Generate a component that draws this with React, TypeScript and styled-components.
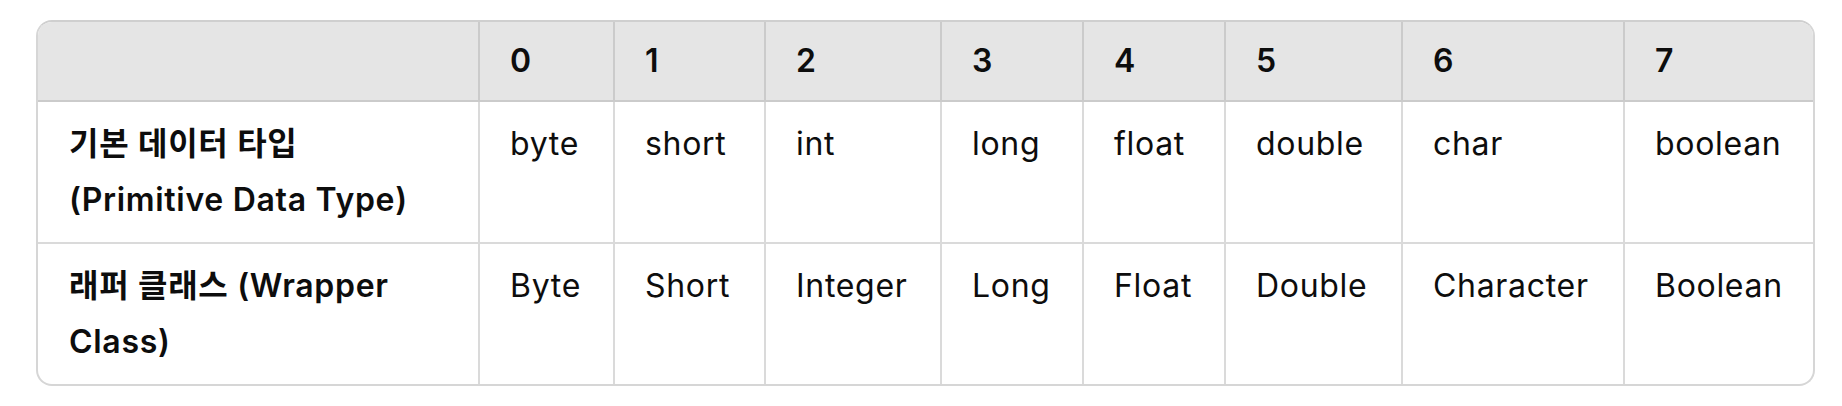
import React from "react";
import styled, { createGlobalStyle } from "styled-components";

const GlobalStyle = createGlobalStyle`
  html, body {
    margin: 0;
    padding: 0;
    background: #ffffff;
  }
  body {
    font-family: Inter, "Noto Sans", "Noto Sans CJK KR", sans-serif;
    color: #0d0d0d;
  }
`;

const Page = styled.div`
  padding: 20px 0 0 36px;
`;

const Frame = styled.div`
  width: 1779px;
  box-sizing: border-box;
  border: 2px solid #d6d6d6;
  border-top-color: #cfcfcf;
  border-radius: 16px;
  overflow: hidden;
`;

const Table = styled.table`
  width: 100%;
  border-collapse: separate;
  border-spacing: 0;
  table-layout: fixed;
  font-family: Inter, "Noto Sans CJK KR", sans-serif;
  font-size: 32px;
  line-height: 56px;
  letter-spacing: 0.7px;
`;

const HeadRow = styled.tr`
  background: #e5e5e5;
`;

const HeadCell = styled.th<{ $w: number; $first?: boolean }>`
  box-sizing: border-box;
  width: ${(p) => p.$w}px;
  padding: 11px 28px 11px 30px;
  text-align: left;
  font-weight: 600;
  color: #0d0d0d;
  border-bottom: 2px solid #cbcbcb;
  border-left: ${(p) => (p.$first ? "none" : "2px solid #cbcbcb")};
`;

const BodyRow = styled.tr<{ $last?: boolean }>`
  & > td {
    border-bottom: ${(p) => (p.$last ? "none" : "2px solid #dadada")};
  }
`;

const LabelCell = styled.td`
  box-sizing: border-box;
  padding: 14px 20px 14px 31px;
  vertical-align: top;
  font-weight: 600;
  color: #0d0d0d;
`;

const ValueCell = styled.td`
  box-sizing: border-box;
  padding: 14px 4px 14px 30px;
  vertical-align: top;
  font-weight: 400;
  color: #0d0d0d;
  border-left: 2px solid #dadada;
  white-space: nowrap;
`;

const widths = [440, 135, 151, 176, 142, 142, 177, 222, 190];
const headers = ["", "0", "1", "2", "3", "4", "5", "6", "7"];

const rows: { label: React.ReactNode; values: string[] }[] = [
  {
    label: (
      <>
        기본 데이터 타입
        <br />
        (Primitive Data Type)
      </>
    ),
    values: ["byte", "short", "int", "long", "float", "double", "char", "boolean"],
  },
  {
    label: (
      <>
        래퍼 클래스 (Wrapper
        <br />
        Class)
      </>
    ),
    values: ["Byte", "Short", "Integer", "Long", "Float", "Double", "Character", "Boolean"],
  },
];

export default function App() {
  return (
    <>
      <GlobalStyle />
      <Page>
        <Frame>
          <Table>
            <thead>
              <HeadRow>
                {headers.map((h, i) => (
                  <HeadCell key={i} $w={widths[i]} $first={i === 0}>
                    {h}
                  </HeadCell>
                ))}
              </HeadRow>
            </thead>
            <tbody>
              {rows.map((r, ri) => (
                <BodyRow key={ri} $last={ri === rows.length - 1}>
                  <LabelCell>{r.label}</LabelCell>
                  {r.values.map((v, vi) => (
                    <ValueCell key={vi}>{v}</ValueCell>
                  ))}
                </BodyRow>
              ))}
            </tbody>
          </Table>
        </Frame>
      </Page>
    </>
  );
}
